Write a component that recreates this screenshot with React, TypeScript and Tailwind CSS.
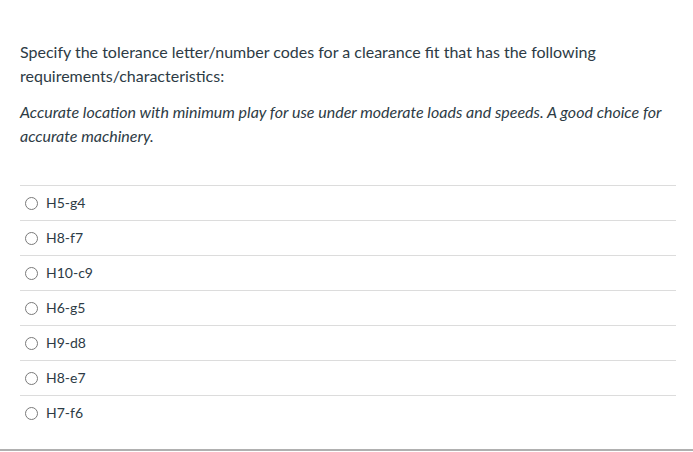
const options = ["H5-g4", "H8-f7", "H10-c9", "H6-g5", "H9-d8", "H8-e7", "H7-f6"];

function Radio() {
  return (
    <span className="w-[13px] h-[13px] rounded-full border border-[#7a7a7a] bg-white shrink-0" />
  );
}

export default function App() {
  return (
    <div
      className="w-[693px] h-[452px] bg-white text-[#2d3b45] flex flex-col"
      style={{ fontFamily: "Lato, 'Noto Sans', sans-serif" }}
    >
      <div className="flex-1 pl-5 pr-[17px] pt-10">
        <p className="text-base leading-6">
          Specify the tolerance letter/number codes for a clearance fit that has the following
          requirements/characteristics:
        </p>
        <p className="text-base leading-6 italic mt-3">
          Accurate location with minimum play for use under moderate loads and speeds. A good choice for
          accurate machinery.
        </p>
        <div className="mt-[37px]">
          {options.map((o) => (
            <div
              key={o}
              className="h-[35px] border-t border-[#dcdcdc] flex items-center gap-[8px] pl-[5px]"
            >
              <Radio />
              <span className="text-sm">{o}</span>
            </div>
          ))}
        </div>
      </div>
      <div className="h-[2px] bg-[#b0b0b0] mb-[1px]" />
    </div>
  );
}
